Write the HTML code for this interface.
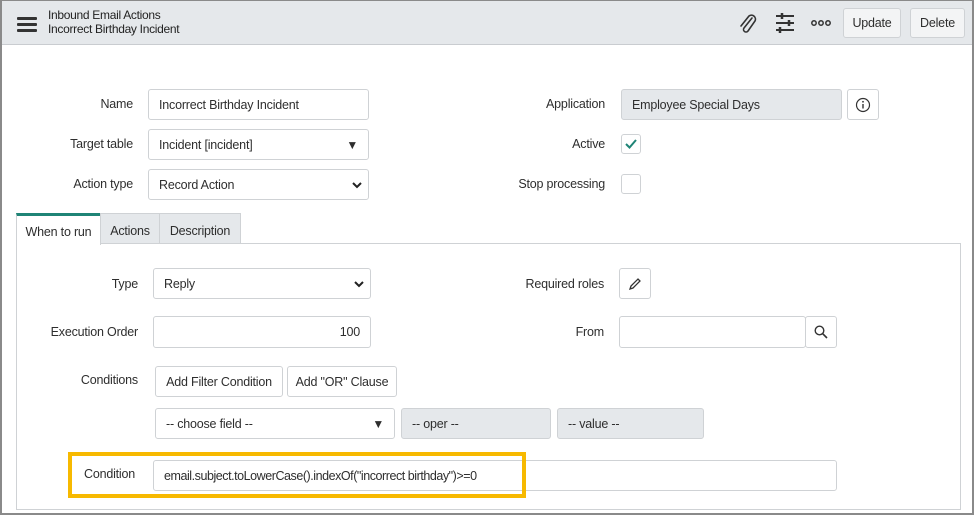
<!DOCTYPE html>
<html><head><style>
*{box-sizing:border-box;margin:0;padding:0}
body{width:974px;height:515px;position:relative;background:#fff;font-family:"Liberation Sans",sans-serif;font-size:12.5px;letter-spacing:-0.2px;color:#2e2e2e;overflow:hidden}
.a{position:absolute}
.frame{left:0;top:0;width:974px;height:515px;border:2px solid #8a8a8a;border-top:1px solid #8a8a8a}
.hdr{left:1px;top:1px;width:971px;height:44px;background:#e5e8eb;border-bottom:1px solid #c9ccd0}
.lbl{text-align:right;line-height:16px}
.in{border:1px solid #cfd2d5;border-radius:3px;background:#fff;padding-left:10px;display:flex;align-items:center}
.gr{background:#e5e8eb}
.btn{border:1px solid #cfd2d5;border-radius:3px;background:#fff;display:flex;align-items:center;justify-content:center}
.hb{background:#f3f4f5}
.tab{top:213px;height:31px;border:1px solid #cfd2d5;background:#e5e8eb;display:flex;align-items:center;justify-content:center;padding-top:4px}
</style></head><body>
<div class="a hdr"></div>
<div class="a" style="left:17px;top:17px;width:20px;height:3px;background:#333;border-radius:1px"></div>
<div class="a" style="left:17px;top:23px;width:20px;height:3px;background:#333;border-radius:1px"></div>
<div class="a" style="left:17px;top:29px;width:20px;height:3px;background:#333;border-radius:1px"></div>
<div class="a" style="left:48px;top:8px;font-size:12px;line-height:14px;color:#222;letter-spacing:-0.3px">Inbound Email Actions<br>Incorrect Birthday Incident</div>
<svg class="a" style="left:738px;top:12px" width="20" height="22" viewBox="0 0 20 22"><path d="M14 6 L6 16 a2.5 2.5 0 0 0 4 3 L17 9 a4 4 0 0 0 -6 -5 L3 14" fill="none" stroke="#333" stroke-width="1.6" stroke-linecap="round"/></svg>
<svg class="a" style="left:775px;top:13px" width="20" height="20" viewBox="0 0 20 20" stroke="#333" stroke-width="2"><path d="M1 3h18M1 10h18M1 17h18"/><path d="M7 0v6M14 7v6M5 14v6" stroke-width="2.5"/></svg>
<svg class="a" style="left:811px;top:19px" width="20" height="8" viewBox="0 0 20 8" fill="none" stroke="#333" stroke-width="1.5"><circle cx="3" cy="4" r="2.2"/><circle cx="10" cy="4" r="2.2"/><circle cx="17" cy="4" r="2.2"/></svg>
<div class="a btn hb" style="left:843px;top:8px;width:58px;height:30px">Update</div>
<div class="a btn hb" style="left:910px;top:8px;width:55px;height:30px">Delete</div>

<div class="a lbl" style="left:0;width:133px;top:96px">Name</div>
<div class="a in" style="left:148px;top:89px;width:221px;height:31px">Incorrect Birthday Incident</div>
<div class="a lbl" style="left:0;width:133px;top:136px">Target table</div>
<div class="a in" style="left:148px;top:129px;width:221px;height:31px">Incident [incident]<span style="position:absolute;right:10px;font-size:12px">▼</span></div>
<div class="a lbl" style="left:0;width:133px;top:176px">Action type</div>
<div class="a in" style="left:148px;top:169px;width:221px;height:31px">Record Action<svg style="position:absolute;right:6px;top:12px" width="10" height="7" viewBox="0 0 10 7"><path d="M1 1l4 4 4-4" fill="none" stroke="#222" stroke-width="2"/></svg></div>

<div class="a lbl" style="left:400px;width:205px;top:96px">Application</div>
<div class="a in gr" style="left:621px;top:89px;width:221px;height:31px">Employee Special Days</div>
<div class="a btn" style="left:847px;top:89px;width:32px;height:31px"><svg width="16" height="16" viewBox="0 0 16 16"><circle cx="8" cy="8" r="6.5" fill="none" stroke="#333" stroke-width="1.2"/><path d="M8 7v4.5" stroke="#333" stroke-width="1.4"/><circle cx="8" cy="4.8" r="0.9" fill="#333"/></svg></div>
<div class="a lbl" style="left:400px;width:205px;top:136px">Active</div>
<div class="a btn" style="left:621px;top:134px;width:20px;height:20px"><svg width="14" height="12" viewBox="0 0 14 12"><path d="M2 6l3.5 3.5L12 2" fill="none" stroke="#1f8476" stroke-width="2"/></svg></div>
<div class="a lbl" style="left:400px;width:205px;top:176px">Stop processing</div>
<div class="a btn" style="left:621px;top:174px;width:20px;height:20px"></div>

<div class="a" style="left:16px;top:243px;width:945px;height:267px;border:1px solid #cfd2d5"></div>
<div class="a tab" style="left:16px;width:85px;background:#fff;border-top:3px solid #1f8476;border-bottom:none;height:32px;padding-top:2px">When to run</div>
<div class="a tab" style="left:100px;width:60px">Actions</div>
<div class="a tab" style="left:159px;width:82px">Description</div>

<div class="a lbl" style="left:0;width:138px;top:276px">Type</div>
<div class="a in" style="left:153px;top:268px;width:218px;height:31px">Reply<svg style="position:absolute;right:6px;top:12px" width="10" height="7" viewBox="0 0 10 7"><path d="M1 1l4 4 4-4" fill="none" stroke="#222" stroke-width="2"/></svg></div>
<div class="a lbl" style="left:0;width:138px;top:324px">Execution Order</div>
<div class="a in" style="left:153px;top:316px;width:218px;height:32px;justify-content:flex-end;padding-right:10px">100</div>
<div class="a lbl" style="left:400px;width:204px;top:276px">Required roles</div>
<div class="a btn" style="left:619px;top:268px;width:32px;height:31px"><svg width="14" height="14" viewBox="0 0 14 14"><path d="M2 12l1-3 7-7 2 2-7 7z" fill="none" stroke="#333" stroke-width="1.3"/></svg></div>
<div class="a lbl" style="left:400px;width:204px;top:324px">From</div>
<div class="a in" style="left:619px;top:316px;width:187px;height:32px"></div>
<div class="a btn" style="left:805px;top:316px;width:32px;height:32px"><svg width="14" height="14" viewBox="0 0 14 14"><circle cx="5.5" cy="5.5" r="4.3" fill="none" stroke="#333" stroke-width="1.4"/><path d="M8.7 8.7L13 13" stroke="#333" stroke-width="1.6"/></svg></div>
<div class="a lbl" style="left:0;width:138px;top:372px">Conditions</div>
<div class="a btn" style="left:155px;top:366px;width:128px;height:31px">Add Filter Condition</div>
<div class="a btn" style="left:287px;top:366px;width:110px;height:31px">Add "OR" Clause</div>
<div class="a in" style="left:155px;top:408px;width:240px;height:31px">-- choose field --<span style="position:absolute;right:10px;font-size:12px">▼</span></div>
<div class="a in gr" style="left:401px;top:408px;width:150px;height:31px">-- oper --</div>
<div class="a in gr" style="left:557px;top:408px;width:147px;height:31px">-- value --</div>

<div class="a in" style="left:153px;top:460px;width:684px;height:31px;letter-spacing:-0.45px">email.subject.toLowerCase().indexOf("incorrect birthday")&gt;=0</div>
<div class="a" style="left:68px;top:452px;width:458px;height:46px;border:4px solid #f7b900"></div>
<div class="a" style="left:84px;top:467px">Condition</div>
<div class="a frame"></div>
</body></html>
